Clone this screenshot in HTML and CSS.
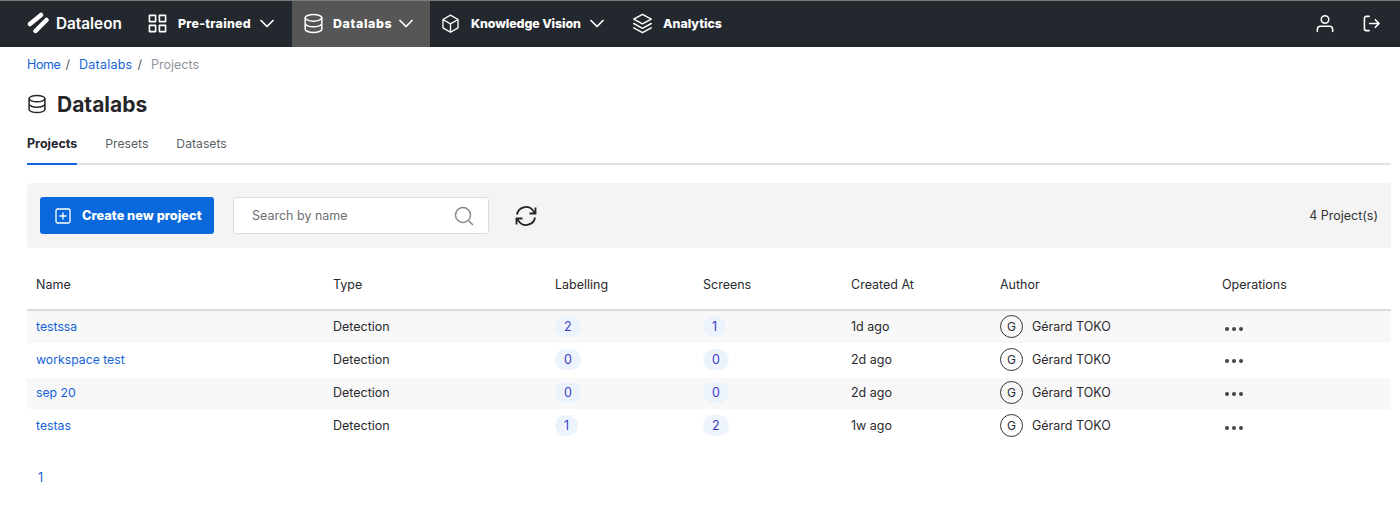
FILE: index.html
```html
<!DOCTYPE html>
<html lang="en">
<head>
<meta charset="utf-8">
<title>Datalabs</title>
<link rel="stylesheet" href="styles.css">
</head>
<body>
<svg class="defs" width="0" height="0" aria-hidden="true">
  <symbol id="db" viewBox="0 0 24 24"><ellipse cx="12" cy="5.500" rx="9.500" ry="3.800"/><path d="M2.500 5.500v13c0 2 4.200 3.800 9.500 3.800s9.500-1.800 9.500-3.800v-13M2.500 12c0 2 4.200 3.800 9.500 3.800s9.500-1.800 9.500-3.800"/></symbol>
  <symbol id="chev" viewBox="0 0 14 9"><path d="M1 1.500l6 6 6-6"/></symbol>
</svg>
<header class="topbar">
  <a class="brand">
    <svg class="brand-icon" viewBox="0 0 24 24"><path d="M3 13L14 4M8.500 20L19.500 9"/></svg>
    <span>Dataleon</span>
  </a>
  <a class="nav-item n-pre">
    <svg class="ico" viewBox="0 0 20 20"><path d="M1.500 1.500h6.500v6.500h-6.500zM12 1.500h6.500v6.500h-6.500zM1.500 12h6.500v6.500h-6.500zM12 12h6.500v6.500h-6.500z"/></svg>
    <span class="label l-pre">Pre-trained</span>
    <svg class="chev"><use href="#chev"/></svg>
  </a>
  <a class="nav-item active">
    <svg class="ico db"><use href="#db"/></svg>
    <span class="label l-data">Datalabs</span>
    <svg class="chev"><use href="#chev"/></svg>
  </a>
  <a class="nav-item n-know">
    <svg class="ico" viewBox="0 0 24 24"><path d="M12 1.500l9.500 5.500v10.500l-9.500 5.500-9.500-5.500v-10.500zM2.500 7l9.500 5.500 9.500-5.500M12 12.500v10.500"/></svg>
    <span class="label l-know">Knowledge Vision</span>
    <svg class="chev"><use href="#chev"/></svg>
  </a>
  <a class="nav-item">
    <svg class="ico wide" viewBox="0 0 24 24"><path d="M12 1.500l10 5.500-10 5.500-10-5.500zM2 12l10 5.500 10-5.500M2 17l10 5.500 10-5.500"/></svg>
    <span class="label">Analytics</span>
  </a>
  <div class="nav-right">
    <svg class="ico user" viewBox="0 0 20 20"><circle cx="10" cy="5.500" r="4.200"/><path d="M1.500 19v-2.500c0-2 1.600-3.500 3.500-3.500h10c1.900 0 3.500 1.500 3.500 3.500v2.500"/></svg>
    <svg class="ico logout" viewBox="0 0 18 18"><path d="M6.500 1.500h-3a2 2 0 0 0-2 2v11a2 2 0 0 0 2 2h3M7 9h10M13 5l4 4-4 4"/></svg>
  </div>
</header>

<main class="page">
  <nav class="crumbs">
    <a class="crumb-home">Home</a><span class="sep">/</span><a class="crumb-wide">Datalabs</a><span class="sep">/</span><span class="current">Projects</span>
  </nav>
  <h1 class="title"><svg class="title-icon"><use href="#db"/></svg>Datalabs</h1>
  <div class="tabs">
    <a class="tab selected">Projects</a>
    <a class="tab">Presets</a>
    <a class="tab">Datasets</a>
  </div>

  <section class="toolbar">
    <button class="create">
      <svg class="plus" viewBox="0 0 16 16"><rect x="1" y="1" width="14" height="14" rx="1.500"/><path d="M8 4.500v7M4.500 8h7"/></svg>
      Create new project
    </button>
    <div class="search">
      <span>Search by name</span>
      <svg class="lens" viewBox="0 0 20 20"><circle cx="9" cy="9" r="7.500"/><path d="M14.500 14.500l4.500 4.500"/></svg>
    </div>
    <svg class="refresh" viewBox="0 0 24 24"><path d="M3 10.500a9 9 0 0 1 16-4l2.500 3M21.500 3.500v6h-6M21 13.500a9 9 0 0 1-16 4l-2.500-3M2.500 20.500v-6h6"/></svg>
    <div class="count">4 Project(s)</div>
  </section>

  <table class="grid">
    <colgroup>
      <col class="c-name"><col class="c-type"><col class="c-num"><col class="c-num"><col class="c-created"><col class="c-auth"><col>
    </colgroup>
    <thead>
      <tr><th>Name</th><th>Type</th><th>Labelling</th><th>Screens</th><th>Created At</th><th>Author</th><th>Operations</th></tr>
    </thead>
    <tbody>
      <tr class="r1">
        <td><a>testssa</a></td><td>Detection</td><td><span class="pill">2</span></td><td><span class="pill">1</span></td><td>1d ago</td>
        <td><div class="author"><span class="avatar">G</span>Gérard TOKO</div></td><td><span class="dots"><i></i><i></i><i></i></span></td>
      </tr>
      <tr class="r2">
        <td><a>workspace test</a></td><td>Detection</td><td><span class="pill">0</span></td><td><span class="pill">0</span></td><td>2d ago</td>
        <td><div class="author"><span class="avatar">G</span>Gérard TOKO</div></td><td><span class="dots"><i></i><i></i><i></i></span></td>
      </tr>
      <tr class="r3">
        <td><a>sep 20</a></td><td>Detection</td><td><span class="pill">0</span></td><td><span class="pill">0</span></td><td>2d ago</td>
        <td><div class="author"><span class="avatar">G</span>Gérard TOKO</div></td><td><span class="dots"><i></i><i></i><i></i></span></td>
      </tr>
      <tr class="r4">
        <td><a>testas</a></td><td>Detection</td><td><span class="pill">1</span></td><td><span class="pill">2</span></td><td>1w ago</td>
        <td><div class="author"><span class="avatar">G</span>Gérard TOKO</div></td><td><span class="dots"><i></i><i></i><i></i></span></td>
      </tr>
    </tbody>
  </table>
  <div class="pager"><a>1</a></div>
</main>
</body>
</html>
```

FILE: styles.css
```css
* { box-sizing: border-box; }
html, body { margin: 0; height: 100%; }
body {
  font-family: "Inter", "Liberation Sans", sans-serif;
  font-size: 12.500px;
  color: #2a2a2e;
  background: #fff;
  overflow: hidden;
}
a { color: #1463d8; text-decoration: none; }
.defs { position: absolute; }

.topbar {
  display: flex;
  height: 47px;
  align-items: stretch;
  background: #23272e;
  border-top: 1px solid #7a7a7a;
  color: #fff;
  padding-left: 27px;
  font-weight: 800;
  font-size: 12.400px;
}
.topbar svg { fill: none; stroke: #fff; stroke-width: 1.700; stroke-linecap: round; stroke-linejoin: round; }
.brand { display: flex; align-items: center; gap: 5px; color: #fff; font-size: 15.300px; font-weight: 600; width: 110px; padding-bottom: 2px; }
.brand-icon { width: 24px; height: 24px; }
.topbar .brand-icon { stroke-width: 4.500; }
.nav-item { display: flex; align-items: center; flex: none; color: #fff; padding: 0 11px 2px; }
.nav-item.active { background: #565656; width: 138px; }
.n-pre { width: 155px; }
.n-know { width: 191px; }
.ico { width: 19px; height: 21px; margin-right: 11px; }
.ico.db { width: 21px; height: 21px; margin-right: 9px; }
.ico.wide { width: 21px; margin-right: 10px; }
.chev { width: 14px; height: 9px; margin-left: 9px; }
.label { white-space: nowrap; }
.l-pre { width: 73px; letter-spacing: .28px; }
.l-data { width: 57px; letter-spacing: .65px; }
.l-know { width: 110px; letter-spacing: -.1px; }
.nav-right { margin-left: auto; display: flex; align-items: center; gap: 18px; padding: 0 20px 2px 0; }
.ico.user { width: 18px; height: 19px; }
.ico.logout { width: 17px; height: 17px; margin-right: 0; }

.page { padding: 0 9px 0 27px; }
.crumbs { display: flex; height: 35px; align-items: center; font-size: 12.500px; }
.sep { margin: 0 9px 0 5px; color: #555; }
.crumb-home { letter-spacing: -.4px; }
.crumb-wide { letter-spacing: .25px; }
.current { color: #8f939a; }
.title { display: flex; align-items: center; gap: 10px; margin: 4px 0 0; height: 36px; font-size: 21px; font-weight: 700; color: #26262a; }
.title-icon { width: 20px; height: 20px; fill: none; stroke: #26262a; stroke-width: 1.800; }
.tabs { display: flex; gap: 28px; height: 40px; margin-top: 3px; border-bottom: 2px solid #dfe3ea; }
.tab { display: flex; align-items: center; height: 40px; padding-bottom: 4px; color: #5b5f66; font-size: 12.200px; }
.tab.selected { color: #23272e; font-size: 12.500px; font-weight: 700; padding-bottom: 2px; border-bottom: 2px solid #1463d8; }

.toolbar {
  display: flex;
  align-items: center;
  height: 65px;
  margin-top: 18px;
  padding: 0 13px;
  background: #f4f4f4;
  border-radius: 3px;
}
.create {
  display: flex;
  align-items: center;
  gap: 11px;
  width: 174px;
  height: 37px;
  padding: 0 0 0 15px;
  background: #0868dc;
  color: #fff;
  border: 0;
  border-radius: 3px;
  font: 800 12.800px "Inter", sans-serif;
  white-space: nowrap;
}
.plus { width: 16px; height: 16px; fill: none; stroke: #fff; stroke-width: 1.300; }
.search {
  display: flex;
  align-items: center;
  justify-content: space-between;
  width: 256px;
  height: 37px;
  margin-left: 19px;
  padding: 0 14px 0 18px;
  background: #fff;
  border: 1px solid #d8dee8;
  border-radius: 3px;
  color: #6f6f6f;
}
.lens { width: 20px; height: 20px; fill: none; stroke: #8a8a8a; stroke-width: 1.500; }
.refresh { width: 24px; height: 24px; margin-left: 25px; fill: none; stroke: #222; stroke-width: 1.800; }
.count { margin-left: auto; color: #333; }

.grid { width: 100%; border-collapse: collapse; table-layout: fixed; margin-top: 17px; }
.c-name { width: 297px; }
.c-type { width: 222px; }
.c-num { width: 148px; }
.c-created { width: 149px; }
.c-auth { width: 222px; }
th { height: 45px; padding: 0 9px 6px; text-align: left; font-weight: 400; border-bottom: 2px solid #d9d9d9; }
td { padding: 0 9px 1px; }
td a { font-size: 12.250px; }
.r1 td { height: 33px; }
.r2 td { height: 35px; padding-bottom: 3px; }
.r3 td { height: 31px; padding-bottom: 3px; }
.r4 td { height: 34px; }
.r1, .r3 { background: #f8f8f8; }
.pill {
  display: inline-block;
  padding: 0 9px;
  height: 21px;
  line-height: 21px;
  border-radius: 11px;
  background: #edf3fc;
  color: #3b3fc4;
  text-align: center;
  vertical-align: middle;
}
.author { display: flex; align-items: center; gap: 9px; }
.avatar {
  display: flex;
  align-items: center;
  justify-content: center;
  width: 23px;
  height: 23px;
  border: 1px solid #333;
  border-radius: 50%;
  font-size: 12px;
}
.dots { display: flex; gap: 3px; padding: 4px 0 0 3px; }
.dots i { width: 4px; height: 4px; border-radius: 50%; background: #444; }
.pager { margin-top: 27px; padding-left: 11px; }
```
